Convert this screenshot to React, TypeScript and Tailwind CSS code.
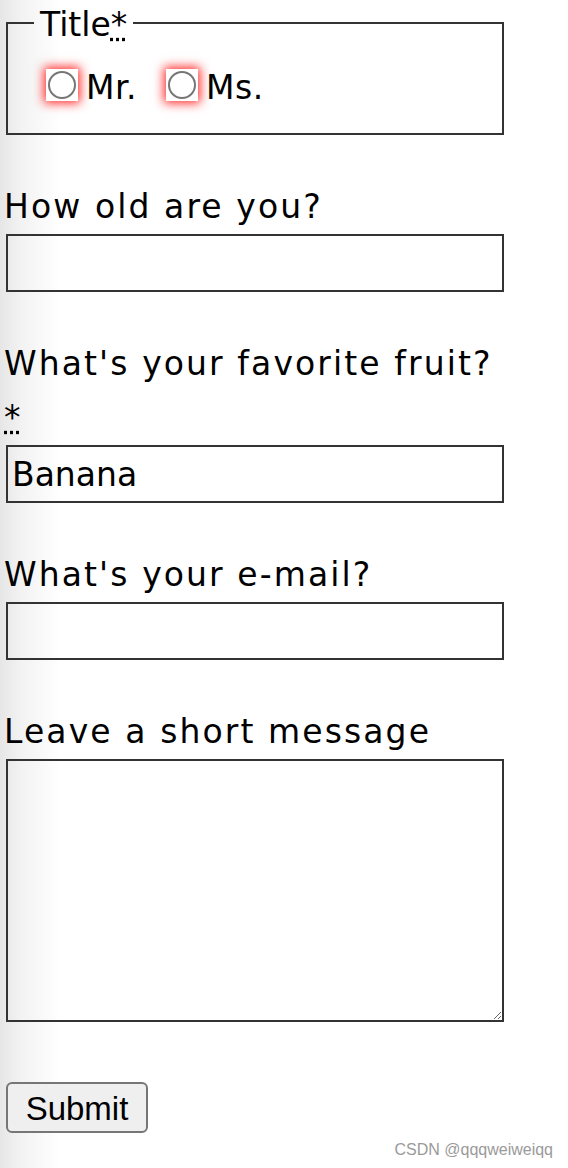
import React from "react";

const labelCls =
  "block pt-[3px] text-[33px] leading-[54px] tracking-[2.1px] text-black";
const inputCls =
  "block ml-[2px] w-[498px] h-[58px] border-2 border-[#333333] bg-transparent px-[4px] font-['DejaVu_Sans',sans-serif] text-[33px] text-black outline-none";

function Radio() {
  return (
    <div className="ml-[12px] flex h-[32px] w-[32px] items-center justify-center bg-white shadow-[0_0_10px_2px_rgba(255,0,0,0.85)]">
      <div className="h-[28px] w-[28px] rounded-full border-2 border-[#767676] bg-white" />
    </div>
  );
}

export default function App() {
  return (
    <div className="relative min-h-[1168px] w-full bg-[linear-gradient(to_right,#e6e6e6_0px,#f2f2f2_20px,#ffffff_60px)] pl-[4px] pt-[1px] font-['DejaVu_Sans',sans-serif] text-black">
      <form className="w-[500px]" onSubmit={(e) => e.preventDefault()}>
        <fieldset className="ml-[2px] w-[498px] border-2 border-[#333333] pb-[25px] pl-[26px] pt-[23px]">
          <legend className="px-[6px] pt-[4px] text-[33px] leading-[40px]">
            Title<abbr title="required">*</abbr>
          </legend>
          <div className="flex items-baseline">
            <Radio />
            <span className="ml-[8px] text-[33px] leading-[40px] tracking-[0.5px]">Mr.</span>
            <div className="ml-[17px] flex">
              <Radio />
            </div>
            <span className="ml-[8px] text-[33px] leading-[40px] tracking-[0.5px]">Ms.</span>
          </div>
        </fieldset>

        <div className="mt-[42px]">
          <label className={labelCls}>How old are you?</label>
          <input className={inputCls} type="text" />
        </div>

        <div className="mt-[42px]">
          <label className={labelCls}>
            What's your favorite fruit?
            <br />
            <abbr title="required">*</abbr>
          </label>
          <input className={inputCls} type="text" defaultValue="Banana" />
        </div>

        <div className="mt-[42px]">
          <label className={labelCls}>What's your e-mail?</label>
          <input className={inputCls} type="text" />
        </div>

        <div className="mt-[42px]">
          <label className={labelCls}>Leave a short message</label>
          <textarea className="block ml-[2px] h-[263px] w-[498px] resize border-2 border-[#333333] bg-transparent text-[32px] outline-none" />
        </div>

        <button
          type="submit"
          className="mt-[60px] ml-[2px] h-[51px] w-[142px] rounded-[6px] border-2 border-[#767676] bg-[#efefef] font-['Liberation_Sans',Arial,sans-serif] text-[33px] text-black"
        >
          Submit
        </button>
      </form>
      <div className="flex justify-end pr-[15px] pt-[8px]">
        <span className="font-['Liberation_Sans',Arial,sans-serif] text-[16px] leading-[18px] text-[#9a9a9a]">
          CSDN @qqqweiweiqq
        </span>
      </div>
    </div>
  );
}
